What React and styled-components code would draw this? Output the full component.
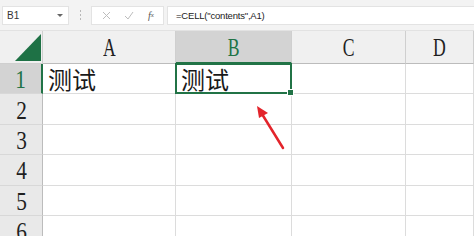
import React from "react";
import styled, { createGlobalStyle } from "styled-components";

const GlobalStyle = createGlobalStyle`
  html, body {
    margin: 0;
    padding: 0;
    background: #ffffff;
    overflow: hidden;
  }
  * {
    box-sizing: border-box;
  }
`;

const green = "#217346";

const Window = styled.div`
  position: relative;
  width: 474px;
  height: 236px;
  overflow: hidden;
  background: #ffffff;
`;

const Toolbar = styled.div`
  height: 31px;
  display: flex;
  align-items: center;
  padding: 0 0 0 2px;
  background: #f3f3f3;
  border-bottom: 1px solid #e2e2e2;
  font-family: "Liberation Sans", Arial, sans-serif;
`;

const NameBox = styled.div`
  width: 67px;
  height: 19px;
  display: flex;
  align-items: center;
  justify-content: space-between;
  padding: 0 5px 0 4px;
  background: #ffffff;
  border: 1px solid #e3e3e3;
  font-size: 10px;
  color: #333;
`;

const Caret = styled.span`
  width: 0;
  height: 0;
  border-left: 3px solid transparent;
  border-right: 3px solid transparent;
  border-top: 3px solid #666;
`;

const Grip = styled.div`
  width: 22px;
  display: flex;
  flex-direction: column;
  align-items: center;
  gap: 2px;
  span {
    width: 1px;
    height: 2px;
    background: #b8b8b8;
  }
`;

const FxGroup = styled.div`
  width: 73px;
  height: 19px;
  display: flex;
  align-items: center;
  justify-content: space-between;
  padding: 0 5px 0 7px;
  background: #ffffff;
  border: 1px solid #e3e3e3;
`;

const FxIcon = styled.span`
  display: flex;
  align-items: center;
  justify-content: center;
  width: 14px;
  color: ${(p) => (p.$muted ? "#bdbdbd" : "#555")};
  font-family: "Liberation Serif", serif;
  font-style: italic;
  font-size: 10px;
`;

const FormulaBar = styled.div`
  flex: 1;
  height: 19px;
  margin-left: 3px;
  display: flex;
  align-items: center;
  padding-left: 8px;
  background: #ffffff;
  border-top: 1px solid #e3e3e3;
  border-bottom: 1px solid #e3e3e3;
  border-left: 1px solid #e3e3e3;
  font-size: 9.5px;
  letter-spacing: -0.2px;
  color: #222;
`;

const Sheet = styled.div`
  display: grid;
  grid-template-columns: 43px 133px 116px 114px 1fr;
  grid-template-rows: 33px repeat(6, 30.4px);
`;

const Corner = styled.div`
  background: #f0f0f0;
  border-right: 1px solid #cfcfcf;
  border-bottom: 1px solid #cfcfcf;
  svg {
    display: block;
  }
`;

const HeadText = styled.span`
  display: inline-block;
  font-family: "Liberation Serif", "Times New Roman", serif;
  font-size: 26px;
  line-height: 1;
  transform: scaleX(${(p) => p.$squeeze});
`;

const ColHead = styled.div`
  display: flex;
  align-items: center;
  justify-content: center;
  padding-top: 2px;
  background: ${(p) => (p.$active ? "#d3d3d3" : "#f0f0f0")};
  color: ${(p) => (p.$active ? green : "#1f1f1f")};
  border-right: 1px solid #cfcfcf;
  border-bottom: ${(p) => (p.$active ? `2px solid ${green}` : "1px solid #bcbcbc")};
`;

const RowHead = styled.div`
  display: flex;
  align-items: center;
  justify-content: center;
  padding-top: 3px;
  background: ${(p) => (p.$active ? "#d3d3d3" : "#e9e9e9")};
  color: ${(p) => (p.$active ? green : "#1f1f1f")};
  border-bottom: 1px solid #d8d8d8;
  border-right: ${(p) => (p.$active ? `2px solid ${green}` : "1px solid #bcbcbc")};
`;

const Cell = styled.div`
  position: relative;
  display: flex;
  align-items: flex-end;
  padding: 0 0 0 5px;
  border-right: 1px solid #dcdcdc;
  border-bottom: 1px solid #dcdcdc;
  font-family: "Noto Sans CJK SC", "Noto Sans", sans-serif;
  font-weight: 400;
  font-size: 24px;
  line-height: 28px;
  color: #1a1a1a;

  ${(p) =>
    p.$selected &&
    `
    &::after {
      content: "";
      position: absolute;
      left: -1px;
      top: -1px;
      right: -1px;
      bottom: -1px;
      border: 2px solid ${green};
    }
    &::before {
      content: "";
      position: absolute;
      right: -3px;
      bottom: -3px;
      width: 5px;
      height: 5px;
      background: ${green};
      border: 1px solid #ffffff;
      z-index: 1;
    }
  `}
`;

const Arrow = styled.svg`
  position: absolute;
  left: 0;
  top: 0;
  pointer-events: none;
`;

const columns = ["A", "B", "C", "D"];
const rows = [1, 2, 3, 4, 5, 6];
const data = { A1: "测试", B1: "测试" };

export default function App() {
  return (
    <>
      <GlobalStyle />
      <Window>
        <Toolbar>
          <NameBox>
            <span>B1</span>
            <Caret />
          </NameBox>
          <Grip>
            <span />
            <span />
            <span />
          </Grip>
          <FxGroup>
            <FxIcon $muted>
              <svg width="9" height="9" viewBox="0 0 9 9">
                <path d="M1 1 L8 8 M8 1 L1 8" stroke="#bdbdbd" strokeWidth="1" />
              </svg>
            </FxIcon>
            <FxIcon $muted>
              <svg width="10" height="9" viewBox="0 0 10 9">
                <path d="M1 5 L4 8 L9 1" stroke="#bdbdbd" strokeWidth="1" fill="none" />
              </svg>
            </FxIcon>
            <FxIcon>
              f<sub style={{ fontSize: "7px" }}>x</sub>
            </FxIcon>
          </FxGroup>
          <FormulaBar>=CELL("contents",A1)</FormulaBar>
        </Toolbar>

        <Sheet>
          <Corner>
            <svg width="42" height="32" viewBox="0 0 42 32">
              <polygon points="15,30 41,30 41,3" fill="#1e7145" />
            </svg>
          </Corner>
          {columns.map((c) => (
            <ColHead key={c} $active={c === "B"}>
              <HeadText $squeeze={0.68}>{c}</HeadText>
            </ColHead>
          ))}
          {rows.map((r) => (
            <React.Fragment key={r}>
              <RowHead $active={r === 1}>
                <HeadText $squeeze={0.82}>{r}</HeadText>
              </RowHead>
              {columns.map((c) => (
                <Cell key={c + r} $selected={c + r === "B1"}>
                  {data[c + r] || ""}
                </Cell>
              ))}
            </React.Fragment>
          ))}
        </Sheet>

        <Arrow width="474" height="236" viewBox="0 0 474 236">
          <line x1="283" y1="148" x2="262" y2="114" stroke="#e3242b" strokeWidth="2.5" strokeLinecap="round" />
          <polygon points="257,106 268,113 259,118" fill="#e3242b" />
        </Arrow>
      </Window>
    </>
  );
}
